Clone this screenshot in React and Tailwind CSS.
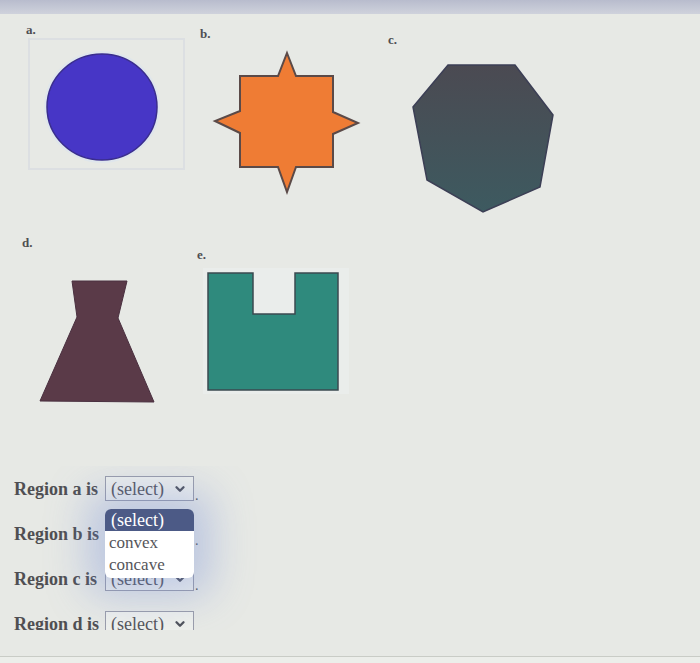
import React from "react";
import { ChevronDown } from "lucide-react";

const serif = { fontFamily: '"Liberation Serif", "Times New Roman", serif' };

const Label = ({ children, className }) => (
  <div className={"text-[13px] leading-[13px] font-bold text-[#4e4e52] " + className}>{children}</div>
);

const SelectBox = () => (
  <div className="flex items-end">
    <div className="flex items-center justify-between w-[89px] h-[25px] border border-[#9a9daa] bg-[#eef0ec] pl-[5px] pr-[6px]">
      <span className="text-[18px] leading-[18px] text-[#55555a]">(select)</span>
      <ChevronDown size={14} strokeWidth={4} color="#50535c" />
    </div>
    <span className="text-[14px] leading-[10px] text-[#555] ml-[1px]">.</span>
  </div>
);

const regions = ["a", "b", "c", "d"];

const App = () => {
  return (
    <div className="w-[700px] h-[663px] overflow-hidden bg-[#e7e9e5] relative" style={serif}>
      <div className="h-[14px] bg-gradient-to-b from-[#b8bccd] to-[#cfd2dc]" />

      {/* first row of shapes */}
      <div className="flex pl-[22px] h-[216px]">
        <div className="w-[178px] flex flex-col">
          <Label className="mt-[9px] ml-[4px]">a.</Label>
          <svg width="178" height="140" className="mt-[1px]">
            <rect x="7" y="2" width="155" height="130" fill="none" stroke="#dcdfe2" strokeWidth="2" />
            <ellipse cx="80" cy="70" rx="58" ry="56" fill="#dfe6ec" />
            <ellipse cx="80" cy="70" rx="55" ry="53" fill="#4736c6" stroke="#3a2d8e" strokeWidth="1.5" />
          </svg>
        </div>
        <div className="w-[188px] flex flex-col">
          <Label className="mt-[13px]">b.</Label>
          <svg width="170" height="155" className="mt-[5px]">
            <polygon
              points="87,8 96,31 133,31 133,67 158,78 133,89 133,122 96,122 87,147 78,122 40,122 40,88 15,76 40,66 40,31 78,31"
              fill="#ef7c34"
              stroke="#5b4a48"
              strokeWidth="2"
              strokeLinejoin="miter"
            />
          </svg>
        </div>
        <div className="flex-1 flex flex-col">
          <Label className="mt-[19px]">c.</Label>
          <svg width="180" height="165" className="mt-[9px]">
            <defs>
              <linearGradient id="hept" x1="0" y1="0" x2="0" y2="1">
                <stop offset="0" stopColor="#4b4a52" />
                <stop offset="1" stopColor="#3d5a60" />
              </linearGradient>
            </defs>
            <polygon
              points="60,10 127,10 165,60 152,132 95,157 39,125 25,52"
              fill="url(#hept)"
              stroke="#3c3f55"
              strokeWidth="1.5"
            />
          </svg>
        </div>
      </div>

      {/* second row of shapes */}
      <div className="flex pl-[22px] h-[236px]">
        <div className="w-[175px] flex flex-col">
          <Label className="mt-[6px]">d.</Label>
          <svg width="175" height="140" className="mt-[21px]">
            <polygon
              points="50,11 105,11 96,48 132,132 18,131 55,47"
              fill="#5a3a48"
              stroke="#4a3040"
              strokeWidth="1"
            />
          </svg>
        </div>
        <div className="flex-1 flex flex-col">
          <Label className="mt-[18px]">e.</Label>
          <svg width="160" height="140" className="mt-[1px]">
            <rect x="6" y="6" width="146" height="126" fill="#eaedeb" />
            <polygon
              points="11,11 56,11 56,52 98,52 98,11 141,11 141,128 11,128"
              fill="#2f8a7d"
              stroke="#3b4a50"
              strokeWidth="1.5"
            />
          </svg>
        </div>
      </div>

      {/* questions */}
      <div className="relative h-[164px] overflow-hidden pl-[14px]">
        {regions.map((r) => (
          <div key={r} className="flex items-center h-[45px]">
            <span className="w-[91px] text-[18px] leading-[18px] font-bold text-[#4f4f52]">
              Region {r} is
            </span>
            <SelectBox />
          </div>
        ))}

        <div className="absolute left-[105px] top-[43px] w-[89px] h-[69px] bg-white rounded-[6px] overflow-hidden shadow-[0_0_40px_18px_rgba(110,135,215,0.35)]">
          <div className="h-[22px] bg-[#4c5a86] text-white text-[18px] leading-[22px] pl-[6px]">(select)</div>
          <div className="h-[23px] text-[#55555a] text-[17px] leading-[23px] pl-[4px]">convex</div>
          <div className="h-[23px] text-[#55555a] text-[17px] leading-[21px] pl-[4px]">concave</div>
        </div>
      </div>

      <div className="h-[26px]" />
      <div className="border-t border-[#c9ccc6] h-[8px] bg-[#eceeea]" />
    </div>
  );
};

export default App;
